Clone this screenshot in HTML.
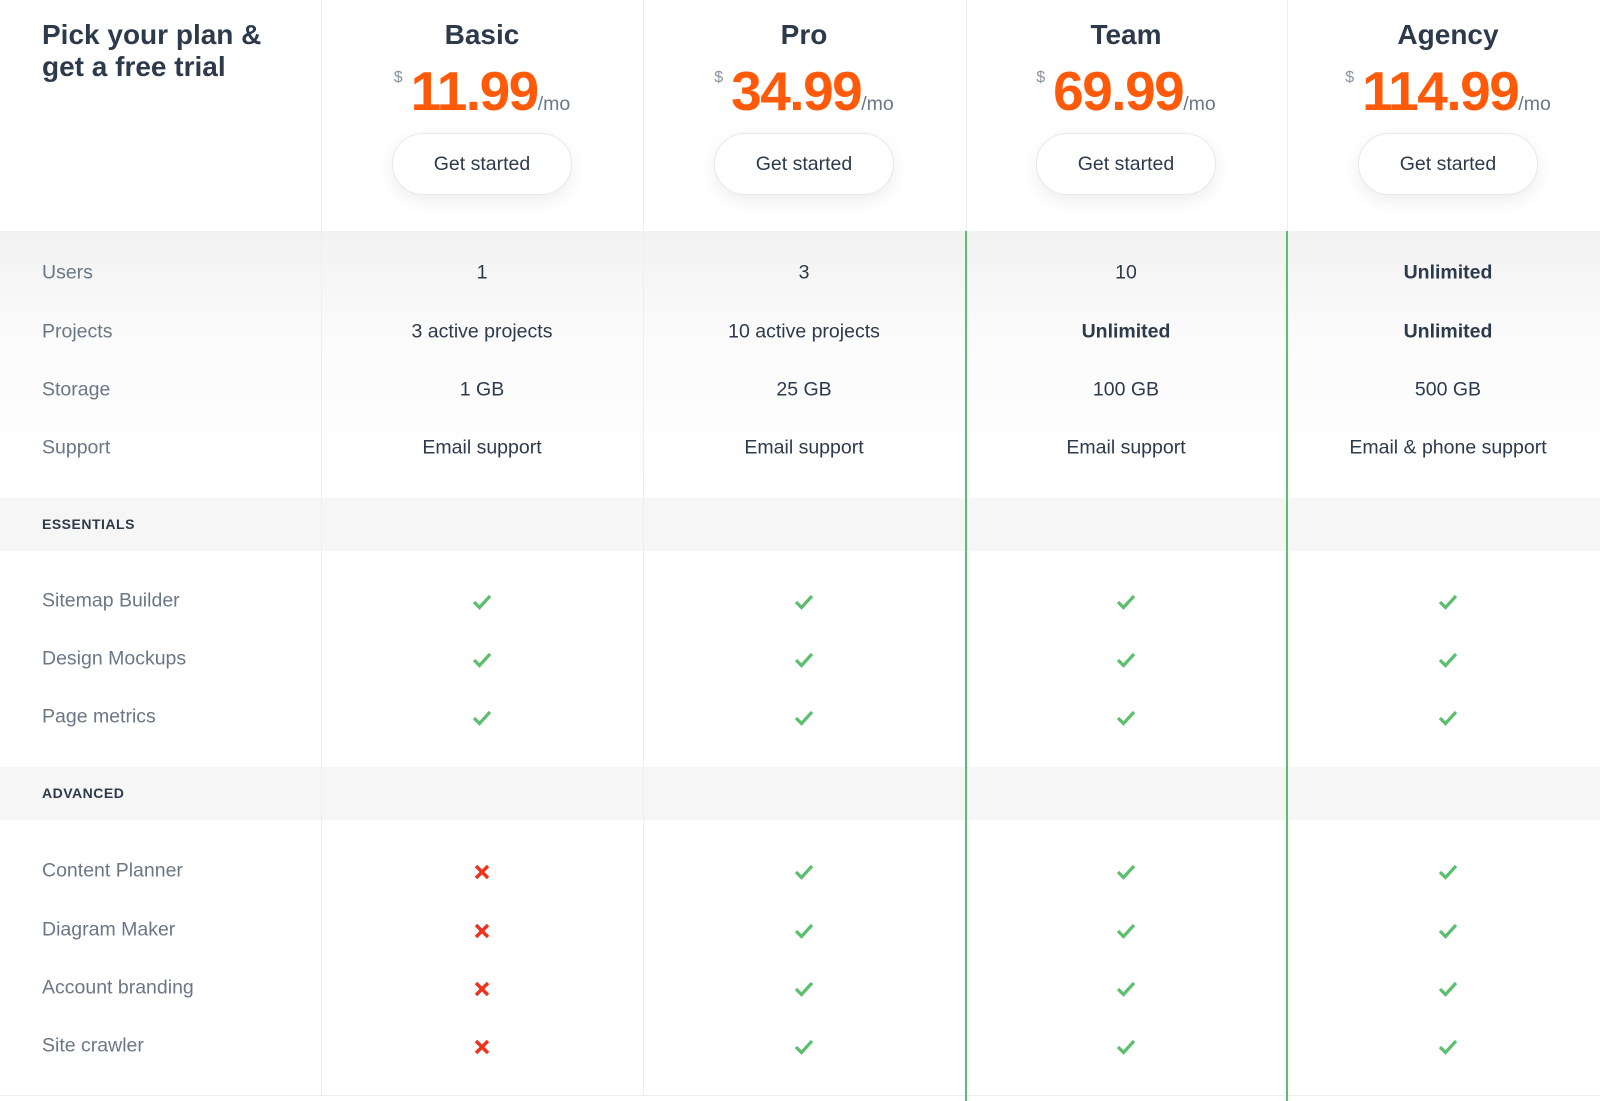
<!DOCTYPE html>
<html><head><meta charset="utf-8"><style>
*{margin:0;padding:0;box-sizing:border-box}
body{width:1600px;height:1101px;background:#fff;font-family:"Liberation Sans",sans-serif;color:#2d3a4b;position:relative;overflow:hidden}
.a{position:absolute}
.vl{position:absolute;top:0;width:1px;background:#eceef0;height:1096px}
.gl{position:absolute;top:231px;width:2px;background:#5cbf6f;height:870px}
.band{position:absolute;left:0;width:1600px;height:53px;background:#f6f6f6}
.bl{position:absolute;left:42px;font-size:14px;font-weight:bold;letter-spacing:.5px;color:#2d3a4b}
.lab{position:absolute;left:42px;font-size:19.5px;color:#6b7785;transform:translateY(-50%)}
.c{position:absolute;width:322px;text-align:center;font-size:19.5px;color:#2d3a4b;transform:translateY(-50%)}
.b{font-weight:bold}
.plan{position:absolute;top:19px;width:322px;text-align:center;font-size:28px;font-weight:bold;color:#2d3a4b}
.price{position:absolute;top:59px;width:322px;text-align:center;white-space:nowrap}
.price .d{font-size:16px;color:#8a94a0;vertical-align:top;position:relative;top:10px;margin-right:8px}
.price .n{font-size:55px;font-weight:bold;color:#ff5a0a;letter-spacing:-1.5px}
.price .m{font-size:19.5px;color:#6b7785}
.btn{position:absolute;top:133px;width:180px;height:62px;border-radius:31px;border:1px solid #e8e8e8;background:#fff;box-shadow:0 6px 18px rgba(0,0,0,.07);font-size:19.5px;line-height:60px;text-align:center;color:#2d3a4b}
svg{display:inline-block;vertical-align:middle}
</style></head><body>
<div class="a" style="left:0;top:231px;width:1600px;height:267px;background:linear-gradient(#f2f2f2,#fbfbfb 40%,#fff)"></div>
<div class="band" style="top:498px"></div>
<div class="band" style="top:767px"></div>
<div class="vl" style="left:321px"></div>
<div class="vl" style="left:643px"></div>
<div class="vl" style="left:966px;height:231px"></div>
<div class="vl" style="left:1287px;height:231px"></div>
<div class="a" style="left:0;top:1095px;width:1600px;height:1px;background:#eceef0"></div>
<div class="gl" style="left:965px"></div>
<div class="gl" style="left:1286px"></div>

<div class="a" style="left:42px;top:19px;font-size:28px;font-weight:bold;line-height:32px;color:#2d3a4b">Pick your plan &amp;<br>get a free trial</div>

<div class="plan" style="left:321px">Basic</div>
<div class="plan" style="left:643px">Pro</div>
<div class="plan" style="left:965px">Team</div>
<div class="plan" style="left:1287px">Agency</div>
<div class="price" style="left:321px"><span class="d">$</span><span class="n">11.99</span><span class="m">/mo</span></div>
<div class="price" style="left:643px"><span class="d">$</span><span class="n">34.99</span><span class="m">/mo</span></div>
<div class="price" style="left:965px"><span class="d">$</span><span class="n">69.99</span><span class="m">/mo</span></div>
<div class="price" style="left:1287px"><span class="d">$</span><span class="n">114.99</span><span class="m">/mo</span></div>
<div class="btn" style="left:392px">Get started</div>
<div class="btn" style="left:714px">Get started</div>
<div class="btn" style="left:1036px">Get started</div>
<div class="btn" style="left:1358px">Get started</div>

<div class="lab" style="top:273px">Users</div>
<div class="lab" style="top:332px">Projects</div>
<div class="lab" style="top:390px">Storage</div>
<div class="lab" style="top:448px">Support</div>
<div class="c" style="left:321px;top:273px">1</div><div class="c" style="left:643px;top:273px">3</div><div class="c" style="left:965px;top:273px">10</div><div class="c b" style="left:1287px;top:273px">Unlimited</div>
<div class="c" style="left:321px;top:332px">3 active projects</div><div class="c" style="left:643px;top:332px">10 active projects</div><div class="c b" style="left:965px;top:332px">Unlimited</div><div class="c b" style="left:1287px;top:332px">Unlimited</div>
<div class="c" style="left:321px;top:390px">1 GB</div><div class="c" style="left:643px;top:390px">25 GB</div><div class="c" style="left:965px;top:390px">100 GB</div><div class="c" style="left:1287px;top:390px">500 GB</div>
<div class="c" style="left:321px;top:448px">Email support</div><div class="c" style="left:643px;top:448px">Email support</div><div class="c" style="left:965px;top:448px">Email support</div><div class="c" style="left:1287px;top:448px">Email &amp; phone support</div>

<div class="bl" style="top:516px">ESSENTIALS</div>
<div class="bl" style="top:785px">ADVANCED</div>

<div class="lab" style="top:601px">Sitemap Builder</div>
<div class="lab" style="top:659px">Design Mockups</div>
<div class="lab" style="top:717px">Page metrics</div>
<div class="lab" style="top:871px">Content Planner</div>
<div class="lab" style="top:930px">Diagram Maker</div>
<div class="lab" style="top:988px">Account branding</div>
<div class="lab" style="top:1046px">Site crawler</div>

<div id="marks"></div>
<script>
var ck='<svg width="20" height="16" viewBox="0 0 20 16"><path d="M2 8l5.5 5.5L18 2" fill="none" stroke="#5cbf6f" stroke-width="3.2"/></svg>';
var x='<svg width="16" height="16" viewBox="0 0 16 16"><path d="M2 2L14 14M14 2L2 14" stroke="#f0311a" stroke-width="3.4"/></svg>';
var ys=[602,660,718,872,931,989,1047],cols=[321,643,965,1287],h='';
ys.forEach(function(y,i){cols.forEach(function(c,j){h+='<div class="c" style="left:'+c+'px;top:'+y+'px;line-height:0">'+((i>=3&&j==0)?x:ck)+'</div>';});});
document.getElementById('marks').innerHTML=h;
</script>
</body></html>
